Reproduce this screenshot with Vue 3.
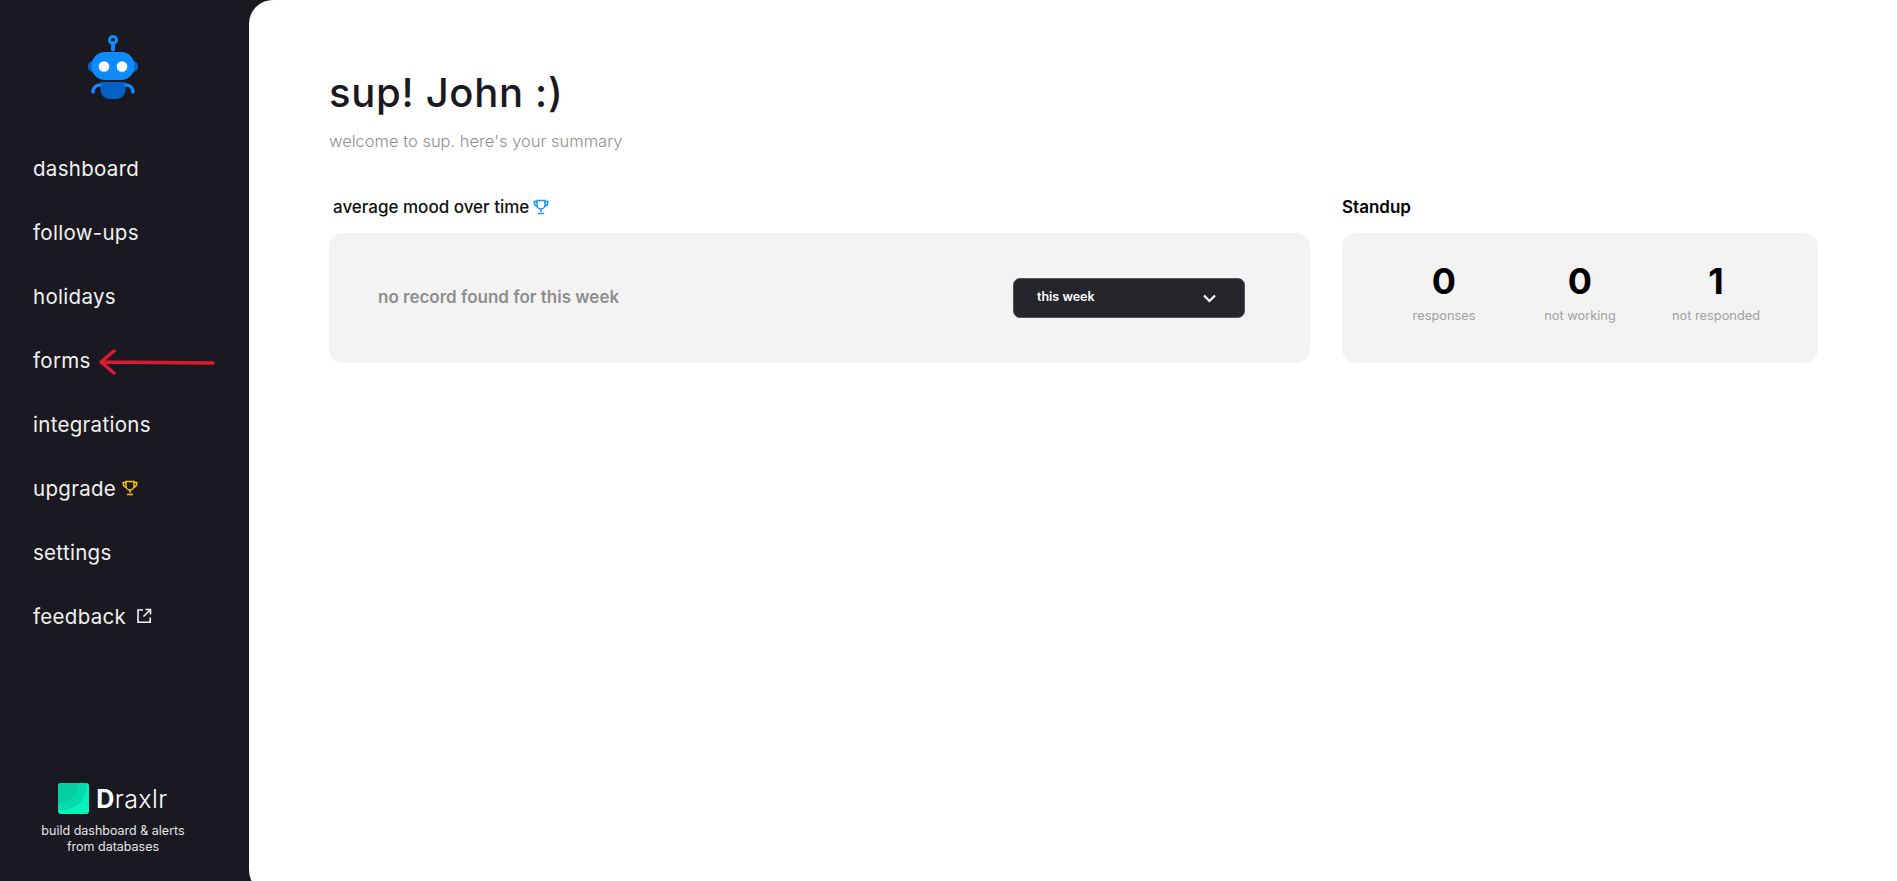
<script setup>
const navItems = [
  { label: 'dashboard' },
  { label: 'follow-ups' },
  { label: 'holidays' },
  { label: 'forms', arrow: true },
  { label: 'integrations' },
  { label: 'upgrade', icon: 'trophy' },
  { label: 'settings' },
  { label: 'feedback', icon: 'external' },
]

const stats = [
  { value: 0, label: 'responses' },
  { value: 0, label: 'not working' },
  { value: 1, label: 'not responded' },
]
</script>

<template>
  <div class="layout">
    <aside class="sidebar">
      <div class="logo">
        <svg width="50" height="64" viewBox="0 0 50 64">
          <circle cx="25" cy="5" r="3.500" fill="none" stroke="#0f8bff" stroke-width="3" />
          <path d="M25 8v6.500" stroke="#0f8bff" stroke-width="4" stroke-linecap="round" />
          <rect x="0" y="26" width="50" height="11" rx="5" fill="#0764c8" />
          <rect x="3.500" y="17" width="43" height="28" rx="13.500" fill="#0f8bff" />
          <circle cx="16" cy="31.500" r="5.300" fill="#fff" />
          <circle cx="34" cy="31.500" r="5.300" fill="#fff" />
          <path d="M12.500 47h25v8a9 9 0 0 1-9 9h-7a9 9 0 0 1-9-9z" fill="#0560c4" />
          <path d="M5 57c0-4 3-7 7-7M45 57c0-4-3-7-7-7" fill="none" stroke="#0f8bff" stroke-width="3.500" stroke-linecap="round" />
        </svg>
      </div>

      <nav class="nav">
        <a v-for="item in navItems" :key="item.label" class="nav-item">
          {{ item.label }}
          <svg v-if="item.icon === 'trophy'" class="trophy" width="16" height="16" viewBox="0 0 16 16" fill="none" stroke="#ffc107" stroke-width="1.500">
            <path d="M4 1.500h8v4.500a4 4 0 0 1-8 0z" />
            <path d="M4 2.500H1.200c0 3 1 4.500 3.300 5M12 2.500h2.800c0 3-1 4.500-3.300 5M8 10v3M5 14.500h6" />
          </svg>
          <svg v-if="item.icon === 'external'" class="external" width="16" height="16" viewBox="0 0 16 16" fill="none" stroke="#f1f1f1" stroke-width="1.600">
            <path d="M7 2H2v12.200h12.200V9.500M9.500 1.500h5v5M14.500 1.500 7.500 8.500" />
          </svg>
          <svg v-if="item.arrow" class="arrow" width="116" height="28" viewBox="0 0 116 28" fill="none" stroke="#dc1b33" stroke-width="3.500" stroke-linecap="round" stroke-linejoin="round">
            <path d="M15 3 2 14l13 11M2 14l112 1" />
          </svg>
        </a>
      </nav>

      <div class="promo">
        <div class="brand">
          <svg width="31" height="31" viewBox="0 0 31 31">
            <rect width="31" height="31" rx="3" fill="#04f2bc" />
            <path d="M0 3a3 3 0 0 1 3-3h25c3 14-8 28-28 27z" fill="#04dbac" />
            <path d="M0 3a3 3 0 0 1 3-3h17c1 11-8 20-20 20z" fill="#03cfa2" />
          </svg>
          <span class="brand-name"><b>D</b>raxlr</span>
        </div>
        <p class="promo-text">build dashboard &amp; alerts<br />from databases</p>
      </div>
    </aside>

    <main class="main">
      <h1 class="title">sup! John :)</h1>
      <p class="subtitle">welcome to sup. here's your summary</p>

      <div class="panels">
        <section class="panel-mood">
          <h2 class="panel-title mood-title">
            average mood over time
            <svg width="16" height="16" viewBox="0 0 16 16" fill="none" stroke="#1e90ff" stroke-width="1.500">
              <path d="M4 1.500h8v4.500a4 4 0 0 1-8 0z" />
              <path d="M4 2.500H1.200c0 3 1 4.500 3.300 5M12 2.500h2.800c0 3-1 4.500-3.300 5M8 10v3M5 14.500h6" />
            </svg>
          </h2>
          <div class="card mood-card">
            <span class="empty">no record found for this week</span>
            <div class="select">
              <span>this week</span>
              <svg width="13" height="9" viewBox="0 0 13 9" fill="none" stroke="#fff" stroke-width="2.200">
                <path d="m1 1.500 5.500 5.500 5.500-5.500" />
              </svg>
            </div>
          </div>
        </section>

        <section class="panel-standup">
          <h2 class="panel-title standup-title">Standup</h2>
          <div class="card standup-card">
            <div v-for="stat in stats" :key="stat.label" class="stat">
              <strong>{{ stat.value }}</strong>
              <span>{{ stat.label }}</span>
            </div>
          </div>
        </section>
      </div>
    </main>
  </div>
</template>

<style>
html,
body {
  margin: 0;
  background: #1a1921;
}
</style>

<style scoped>
.layout {
  display: flex;
  align-items: flex-start;
  height: 881px;
  overflow: hidden;
  background: #1a1921;
  font-family: Inter, 'Liberation Sans', sans-serif;
}

.sidebar {
  width: 249px;
  height: 881px;
  flex-shrink: 0;
  display: flex;
  flex-direction: column;
  box-sizing: border-box;
  padding: 35px 23px 26px 0;
}

.logo {
  display: flex;
  justify-content: center;
  height: 64px;
}

.nav {
  display: flex;
  flex-direction: column;
  margin-top: 37px;
  padding-left: 33px;
}

.nav-item {
  position: relative;
  display: flex;
  align-items: center;
  height: 64px;
  font-size: 20.500px;
  letter-spacing: 0.3px;
  color: #f1f1f1;
  white-space: pre;
}

.trophy {
  margin-left: 0;
}

.external {
  margin-left: 4px;
}

.arrow {
  position: absolute;
  left: 66px;
  top: 20px;
}

.promo {
  margin-top: auto;
  text-align: center;
  color: #e6e6e6;
}

.brand {
  display: flex;
  justify-content: center;
  align-items: center;
  gap: 7px;
}

.brand-name {
  font-size: 25px;
  font-weight: 300;
  letter-spacing: 0.4px;
  color: #fff;
}

.brand-name b {
  font-weight: 700;
}

.promo-text {
  margin: 9px 0 0;
  font-size: 12.500px;
  line-height: 16px;
}

.main {
  flex: 1;
  height: 894px;
  box-sizing: border-box;
  background: #fff;
  border-radius: 24px 0 0 24px;
  padding: 66px 79px 0 80px;
}

.title {
  margin: 0;
  font-size: 40px;
  line-height: 54px;
  letter-spacing: 0.7px;
  font-weight: 500;
  color: #1a1921;
}

.subtitle {
  margin: 9px 0 0;
  font-size: 16.500px;
  line-height: 24px;
  font-weight: 300;
  color: #8f8f8f;
}

.panels {
  display: flex;
  gap: 32px;
  margin-top: 42px;
}

.panel-mood {
  width: 981px;
}

.panel-standup {
  flex: 1;
}

.panel-title {
  display: flex;
  align-items: center;
  gap: 4px;
  margin: 0 0 14px;
  height: 24px;
  font-size: 17px;
  font-weight: 500;
  color: #111;
}

.mood-title {
  padding-left: 4px;
}

.standup-title {
  font-weight: 600;
  color: #000;
}

.card {
  height: 130px;
  background: #f3f3f3;
  border-radius: 14px;
}

.mood-card {
  display: flex;
  align-items: center;
  justify-content: space-between;
  padding: 0 65px 0 49px;
}

.empty {
  margin-bottom: 3px;
  font-size: 17px;
  font-weight: 600;
  color: #8e8e8e;
}

.select {
  display: flex;
  align-items: center;
  justify-content: space-between;
  box-sizing: border-box;
  width: 232px;
  height: 40px;
  padding: 0 28px 0 23px;
  background: #26252c;
  border: 1px solid #56555c;
  border-radius: 7px;
  font-size: 12.500px;
  font-weight: 600;
  color: #fff;
}

.select span {
  margin-bottom: 3px;
}

.standup-card {
  display: flex;
  justify-content: center;
  padding-top: 26px;
  box-sizing: border-box;
}

.stat {
  display: flex;
  flex-direction: column;
  align-items: center;
  width: 136px;
}

.stat strong {
  font-size: 36px;
  line-height: 44px;
  font-weight: 700;
  color: #000;
}

.stat span {
  margin-top: 5px;
  font-size: 12.800px;
  color: #a1a1a1;
}
</style>
